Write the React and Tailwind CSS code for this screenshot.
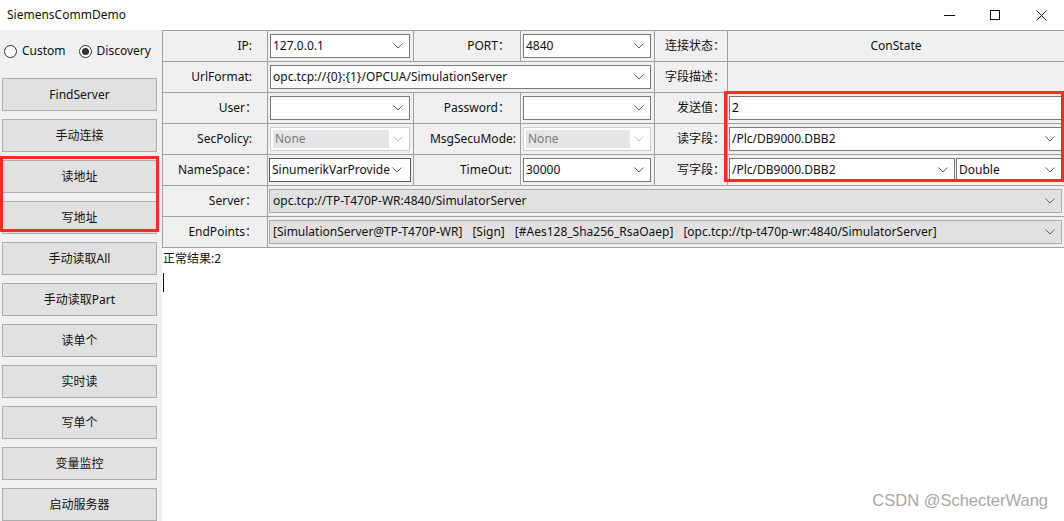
import React from "react";

const F = { fontFamily: '"Noto Sans", "Noto Sans CJK SC", sans-serif' };

function Chevron({ light }) {
  return (
    <svg width="10" height="6" viewBox="0 0 10 6" className="shrink-0">
      <polyline points="0.5,0.5 5,5 9.5,0.5" fill="none" stroke={light ? "#c4c4c4" : "#606060"} strokeWidth="1" />
    </svg>
  );
}

function Combo({ value, className = "", variant = "normal" }) {
  if (variant === "disabled") {
    return (
      <div className={`h-[24px] border border-[#cccccc] bg-white flex items-center pl-[2px] pr-[6px] gap-1 ${className}`}>
        <div className="flex-1 h-[18px] bg-[#e5e5e5] flex items-center pl-[2px] text-[#7a7a7a]">{value}</div>
        <Chevron light />
      </div>
    );
  }
  if (variant === "gray") {
    return (
      <div className={`h-[24px] border border-[#adadad] bg-[#e1e1e1] flex items-center pl-[3px] pr-[6px] ${className}`}>
        <div className="flex-1 overflow-hidden whitespace-nowrap text-[#111]">{value}</div>
        <Chevron />
      </div>
    );
  }
  return (
    <div className={`h-[24px] border border-[#7a7a7a] bg-white flex items-center pl-[2px] pr-[6px] ${className}`}>
      <div className="flex-1 overflow-hidden whitespace-nowrap text-[#111]">{value}</div>
      <Chevron />
    </div>
  );
}

function TextBox({ value, className = "" }) {
  return (
    <div className={`h-[24px] border border-[#7a7a7a] bg-white flex items-center pl-[2px] ${className}`}>
      {value}
    </div>
  );
}

function Label({ children, pr = "pr-[15px]" }) {
  return <div className={`bg-[#f0f0f0] flex items-center justify-end ${pr} whitespace-nowrap text-[#111]`}>{children}</div>;
}

function Cell({ children, className = "" }) {
  return <div className={`bg-[#f0f0f0] flex items-center ${className}`}>{children}</div>;
}

function Btn({ children }) {
  return (
    <div className="h-[33px] border border-[#adadad] bg-[#e1e1e1] flex items-center justify-center text-[#111]">
      {children}
    </div>
  );
}

function Radio({ checked, label }) {
  return (
    <div className="flex items-center gap-[5px]">
      <div className="w-[13px] h-[13px] rounded-full border border-[#333] bg-white flex items-center justify-center">
        {checked && <div className="w-[7px] h-[7px] rounded-full bg-[#333]" />}
      </div>
      <span className="text-[#111]">{label}</span>
    </div>
  );
}

export default function App() {
  return (
    <div className="relative w-[1064px] h-[521px] overflow-hidden bg-[#f0f0f0] text-[12px] flex flex-col" style={F}>
      {/* Title bar */}
      <div className="h-[30px] bg-white flex items-center shrink-0">
        <div className="pl-[7px] flex-1 text-[#111]">SiemensCommDemo</div>
        <div className="flex items-center h-full">
          <div className="w-[46px] h-full flex items-center justify-center">
            <div className="w-[11px] h-px bg-[#111]" />
          </div>
          <div className="w-[46px] h-full flex items-center justify-center">
            <div className="w-[10px] h-[10px] border border-[#111]" />
          </div>
          <div className="w-[46px] h-full flex items-center justify-center">
            <svg width="11" height="11" viewBox="0 0 11 11">
              <path d="M0.5 0.5 L10.5 10.5 M10.5 0.5 L0.5 10.5" stroke="#111" strokeWidth="1" />
            </svg>
          </div>
        </div>
      </div>

      <div className="flex flex-1 min-h-0">
        {/* Left panel */}
        <div className="w-[162px] shrink-0 pl-[2px] pr-[5px] flex flex-col">
          <div className="h-[41px] flex items-center gap-[13px] pl-[2px] pt-[1px]">
            <Radio label="Custom" />
            <Radio checked label="Discovery" />
          </div>
          <div className="flex flex-col gap-[8px] pt-[7px]">
            <Btn>FindServer</Btn>
            <Btn>手动连接</Btn>
            <Btn>读地址</Btn>
            <Btn>写地址</Btn>
            <Btn>手动读取All</Btn>
            <Btn>手动读取Part</Btn>
            <Btn>读单个</Btn>
            <Btn>实时读</Btn>
            <Btn>写单个</Btn>
            <Btn>变量监控</Btn>
            <Btn>启动服务器</Btn>
          </div>
        </div>

        {/* Right area */}
        <div className="flex-1 flex flex-col bg-white">
          <div className="grid grid-cols-[104px_145px_106px_133px_72px_1fr] grid-rows-[repeat(7,30px)] gap-px p-px bg-[#a0a0a0] pr-0">
            {/* Row 1 */}
            <Label>IP:</Label>
            <Cell className="pl-[2px] pr-[3px]"><Combo value="127.0.0.1" className="w-full" /></Cell>
            <Label pr="pr-[10px]">PORT：</Label>
            <Cell className="pl-[2px] pr-[3px]"><Combo value="4840" className="w-full" /></Cell>
            <Label pr="pr-[2px]">连接状态：</Label>
            <Cell className="justify-center text-[#111]">ConState</Cell>
            {/* Row 2 */}
            <Label>UrlFormat:</Label>
            <Cell className="col-span-3 pl-[2px] pr-[3px]"><Combo value="opc.tcp://{0}:{1}/OPCUA/SimulationServer" className="w-full" /></Cell>
            <Label pr="pr-[2px]">字段描述：</Label>
            <Cell />
            {/* Row 3 */}
            <Label pr="pr-[10px]">User：</Label>
            <Cell className="pl-[2px] pr-[3px]"><Combo value="" className="w-full" /></Cell>
            <Label pr="pr-[10px]">Password：</Label>
            <Cell className="pl-[2px] pr-[3px]"><Combo value="" className="w-full" /></Cell>
            <Label pr="pr-[2px]">发送值：</Label>
            <Cell className="pl-[1px] pr-[2px]"><TextBox value="2" className="w-full" /></Cell>
            {/* Row 4 */}
            <Label>SecPolicy:</Label>
            <Cell className="pl-[2px] pr-[3px]"><Combo variant="disabled" value="None" className="w-full" /></Cell>
            <Label pr="pr-[4px]">MsgSecuMode:</Label>
            <Cell className="pl-[2px] pr-[3px]"><Combo variant="disabled" value="None" className="w-full" /></Cell>
            <Label pr="pr-[2px]">读字段：</Label>
            <Cell className="pl-[1px] pr-[2px]"><Combo value="/Plc/DB9000.DBB2" className="w-full" /></Cell>
            {/* Row 5 */}
            <Label pr="pr-[10px]">NameSpace：</Label>
            <Cell className="pl-[1px] pr-[2px]"><Combo value="SinumerikVarProvide" className="w-full !border-[#5a5a5a] !pr-[8px]" /></Cell>
            <Label pr="pr-[8px]">TimeOut:</Label>
            <Cell className="pl-[2px] pr-[3px]"><Combo value="30000" className="w-full" /></Cell>
            <Label pr="pr-[2px]">写字段：</Label>
            <Cell className="pl-[1px] pr-[2px] gap-[1px]">
              <Combo value="/Plc/DB9000.DBB2" className="w-[226px] shrink-0" />
              <Combo value="Double" className="flex-1" />
            </Cell>
            {/* Row 6 */}
            <Label pr="pr-[10px]">Server：</Label>
            <Cell className="col-span-5 pl-[1px] pr-[2px]"><Combo variant="gray" value="opc.tcp://TP-T470P-WR:4840/SimulatorServer" className="w-full" /></Cell>
            {/* Row 7 */}
            <Label pr="pr-[10px]">EndPoints：</Label>
            <Cell className="col-span-5 pl-[1px] pr-[2px]">
              <Combo
                variant="gray"
                value={
                  <span className="flex gap-[10px]">
                    <span>[SimulationServer@TP-T470P-WR]</span>
                    <span>[Sign]</span>
                    <span>[#Aes128_Sha256_RsaOaep]</span>
                    <span>[opc.tcp://tp-t470p-wr:4840/SimulatorServer]</span>
                  </span>
                }
                className="w-full"
              />
            </Cell>
          </div>
          <div className="flex-1 bg-white pl-[1px] pt-[2px] text-[#111]">
            <div>正常结果:2</div>
            <div className="w-px h-[19px] bg-[#111] mt-[5px]" />
          </div>
        </div>
      </div>

      {/* Annotation overlays */}
      <div className="absolute left-0 top-[156px] w-[159px] h-[76px] border-[3px] border-[#ff2a20]" />
      <div className="absolute left-[724px] top-[91px] w-[340px] h-[91px] border-[3px] border-[#ff2a20]" />
      <div
        className="absolute right-[16px] bottom-[8px] text-[16.5px] text-[#a8a8a8]"
        style={{ fontFamily: '"Liberation Sans", Arial, sans-serif' }}
      >
        CSDN @SchecterWang
      </div>
    </div>
  );
}
